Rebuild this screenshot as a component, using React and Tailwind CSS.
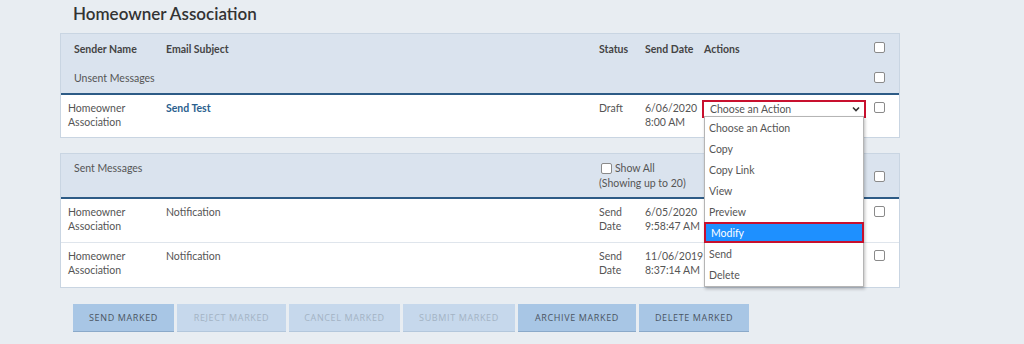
import React from "react";

const font = { fontFamily: "Lato, 'Noto Sans', sans-serif" };

function Box({ className = "" }) {
  return <span className={`inline-block w-[11px] h-[11px] rounded-[2px] border border-[#8a8a8a] bg-white ${className}`} />;
}

const cols = "grid grid-cols-[98px_433px_46px_59px_170px_1fr]";

function Row({ subject, subjectClass, status, date, last }) {
  return (
    <div className={`${cols} pl-[7px] h-[44px] pt-[6px] text-[10.5px] leading-[14px] text-[#555] ${last ? "" : "border-b border-[#dfe5ec]"}`}>
      <div>Homeowner<br />Association</div>
      <div className={subjectClass}>{subject}</div>
      <div>{status[0]}<br />{status[1]}</div>
      <div>{date[0]}<br />{date[1]}</div>
      <div />
      <div className="pt-[1px]"><Box /></div>
    </div>
  );
}

const btnOn = "w-full h-[28px] bg-[#a8c6e5] border-b border-[#8aa9c9] text-[#4a5563] uppercase";
const btnOff = "w-full h-[28px] bg-[#c6d8ec] border-b border-[#b3c7dc] text-[#a3b3c4] uppercase";

export default function App() {
  const items = ["Choose an Action", "Copy", "Copy Link", "View", "Preview", "Modify", "Send", "Delete"];
  return (
    <div className="w-[1024px] h-[344px] bg-[#e8edf2] overflow-hidden" style={font}>
      <div className="pl-[60px] w-[900px]">
        <h1 className="pl-[13px] pt-[3px] h-[33px] text-[17px] leading-[22px] font-semibold text-[#333]">Homeowner Association</h1>

        {/* Table 1 */}
        <div className="border border-[#c9d5e2] bg-white">
          <div className="bg-[#dae3ee] text-[10.5px] leading-[14px] text-[#444]">
            <div className={`${cols} pl-[7px] h-[29px] items-center font-bold`}>
              <div className="pl-[6px]">Sender Name</div>
              <div>Email Subject</div>
              <div>Status</div>
              <div>Send Date</div>
              <div>Actions</div>
              <div className="pt-[1px]"><Box /></div>
            </div>
            <div className={`${cols} pl-[7px] h-[30px] items-center text-[#555]`}>
              <div className="pl-[6px] col-span-5">Unsent Messages</div>
              <div className="pt-[1px]"><Box /></div>
            </div>
          </div>
          <div className="h-[2px] bg-[#2d5b86]" />
          <div className={`${cols} pl-[7px] h-[42px] pt-[6px] text-[10.5px] leading-[14px] text-[#555]`}>
            <div>Homeowner<br />Association</div>
            <div className="font-bold text-[#2b5f8e]">Send Test</div>
            <div>Draft</div>
            <div>6/06/2020<br />8:00 AM</div>
            <div className="relative">
              <div className="absolute left-[-2px] top-[-1px] w-[164px] h-[18px] border-2 border-[#c8102e] bg-white flex items-center justify-between pl-[6px] pr-[4px] text-[10.5px] text-[#555]">
                <span>Choose an Action</span>
                <svg width="8" height="6" viewBox="0 0 8 6"><path d="M1 1.5 L4 4.5 L7 1.5" fill="none" stroke="#333" strokeWidth="1.6" /></svg>
              </div>
              <div className="absolute left-0 top-[15px] w-[160px] bg-white border border-[#b5b5b5] shadow-[1px_2px_3px_rgba(0,0,0,0.25)] z-10 pb-[1px]">
                {items.map((it) =>
                  it === "Modify" ? (
                    <div key={it} className="h-[21px] -mx-[1px] border-2 border-[#c8102e] bg-[#1e90ff] text-white flex items-center pl-[5px] text-[10.5px]">{it}</div>
                  ) : (
                    <div key={it} className="h-[21px] flex items-center pl-[4px] text-[10.5px] text-[#555]">{it}</div>
                  )
                )}
              </div>
            </div>
            <div className="pt-[1px]"><Box /></div>
          </div>
        </div>

        {/* Table 2 */}
        <div className="mt-[15px] border border-[#c9d5e2] bg-white">
          <div className={`bg-[#dae3ee] ${cols} pl-[7px] h-[43px] text-[10.5px] leading-[15px] text-[#555]`}>
            <div className="pl-[6px] col-span-2 pt-[7px]">Sent Messages</div>
            <div className="col-span-3 pt-[7px]">
              <div className="flex items-center gap-[3px] pl-[2px]"><Box className="w-[9px] h-[9px]" /><span>Show All</span></div>
              <div>(Showing up to 20)</div>
            </div>
            <div className="pt-[17px]"><Box /></div>
          </div>
          <div className="h-[2px] bg-[#2d5b86]" />
          <Row subject="Notification" status={["Send", "Date"]} date={["6/05/2020", "9:58:47 AM"]} />
          <Row subject="Notification" status={["Send", "Date"]} date={["11/06/2019", "8:37:14 AM"]} last />
        </div>

        {/* Buttons */}
        <div className="mt-[16px] pl-[13px] flex gap-[3px] text-[9px] tracking-[0.07em]" style={{ fontFamily: "'Open Sans', sans-serif" }}>
          <div className="w-[101px]"><button className={btnOn}>Send Marked</button></div>
          <div className="w-[109px]"><button className={btnOff}>Reject Marked</button></div>
          <div className="w-[111px]"><button className={btnOff}>Cancel Marked</button></div>
          <div className="w-[112px]"><button className={btnOff}>Submit Marked</button></div>
          <div className="w-[118px]"><button className={btnOn}>Archive Marked</button></div>
          <div className="w-[110px]"><button className={btnOn}>Delete Marked</button></div>
        </div>
      </div>
    </div>
  );
}
